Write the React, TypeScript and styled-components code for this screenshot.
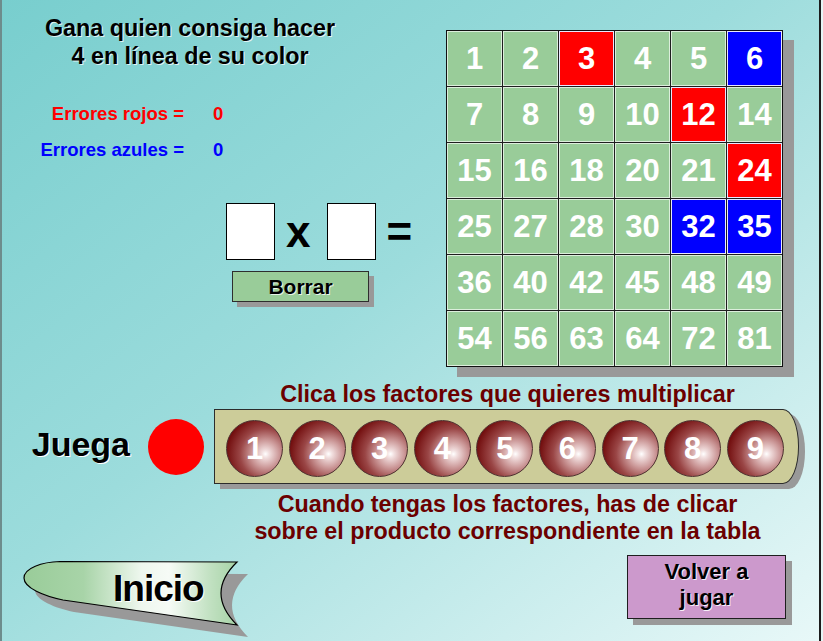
import styled, { createGlobalStyle } from 'styled-components';

const FONT = `"Liberation Sans", Arial, Helvetica, sans-serif`;

const GlobalStyle = createGlobalStyle`
  html, body {
    margin: 0;
    padding: 0;
  }
  body {
    background: #e6f6f6;
    font-family: ${FONT};
  }
`;

const Page = styled.div`
  box-sizing: border-box;
  width: 821px;
  height: 641px;
  overflow: hidden;
  padding-top: 14px;
  border-left: 2px solid #6d8c8c;
  border-right: 2px solid #1c1c1c;
  background: linear-gradient(to bottom right, #78cece 0%, #9cdcdc 45%, #e8f8f8 100%);
  font-family: ${FONT};
  font-weight: bold;
`;

const TopSection = styled.div`
  display: flex;
  align-items: flex-start;
`;

const LeftColumn = styled.div`
  width: 444px;
  display: flex;
  flex-direction: column;
`;

const Title = styled.h1`
  width: 376px;
  margin: 0;
  font-size: 23.3px;
  line-height: 28px;
  font-weight: bold;
  text-align: center;
  color: #000;
  text-shadow: 1px 1px 0 rgba(255, 255, 255, 0.75);
`;

const ErrorGrid = styled.div`
  margin-top: 33px;
  display: grid;
  grid-template-columns: 182px auto;
  column-gap: 29px;
  row-gap: 14px;
  font-size: 18.5px;
  line-height: 22px;
`;

const ErrorLabel = styled.span<{ $color: string }>`
  text-align: right;
  color: ${({ $color }) => $color};
`;

const ErrorValue = styled.span<{ $color: string }>`
  color: ${({ $color }) => $color};
`;

const Equation = styled.div`
  margin: 42px 0 0 224px;
  display: flex;
  align-items: center;
  height: 57px;
`;

const FactorBox = styled.div<{ $left?: number }>`
  box-sizing: border-box;
  width: 49px;
  height: 57px;
  margin-left: ${({ $left = 0 }) => $left}px;
  background: #fff;
  border: 1px solid #000;
`;

const Operator = styled.span<{ $left: number }>`
  margin-left: ${({ $left }) => $left}px;
  font-size: 44px;
  line-height: 44px;
  color: #000;
`;

const BorrarButton = styled.button`
  box-sizing: border-box;
  margin: 11px 0 0 230px;
  width: 137px;
  height: 31px;
  padding: 0;
  background: #99cc99;
  border: 1px solid #2e2e2e;
  box-shadow: 5px 5px 0 #999;
  font-family: ${FONT};
  font-weight: bold;
  font-size: 21px;
  color: #000;
  text-shadow: 1px 1px 0 rgba(255, 255, 255, 0.8);
  cursor: pointer;
`;

const Board = styled.div`
  margin-top: 16px;
  display: grid;
  grid-template-columns: repeat(6, 55px);
  grid-auto-rows: 55px;
  gap: 1px;
  background: #1e1e1e;
  border: 1px solid #111;
  box-shadow: 11px 10px 0 #999;
`;

const Cell = styled.div<{ $bg: string }>`
  box-sizing: border-box;
  display: flex;
  align-items: center;
  justify-content: center;
  background: ${({ $bg }) => $bg};
  border: 1px solid ${({ $bg }) => ($bg === '#99cc99' ? '#dceedc' : '#e8e8ff')};
  color: #fff;
  font-size: 31px;
  cursor: pointer;
`;

const GameArea = styled.div`
  margin-top: 14px;
  display: grid;
  grid-template-columns: 212px 587px;
`;

const Instruction = styled.p<{ $lineHeight: number }>`
  grid-column: 2;
  margin: 0;
  text-align: center;
  font-size: 23.3px;
  line-height: ${({ $lineHeight }) => $lineHeight}px;
  color: #6b0000;
`;

const PlayerCell = styled.div`
  display: flex;
  align-items: center;
  justify-content: flex-end;
  gap: 18px;
  padding-right: 10px;
  margin-top: 2px;
`;

const PlayerLabel = styled.span`
  font-size: 34px;
  line-height: 34px;
  margin-bottom: 6px;
  color: #000;
  text-shadow: 1px 1px 0 #fff;
`;

const PlayerDot = styled.div<{ $color: string }>`
  width: 56px;
  height: 56px;
  border-radius: 50%;
  background: ${({ $color }) => $color};
`;

const Tray = styled.div`
  box-sizing: border-box;
  margin-top: 2px;
  width: 585px;
  height: 75px;
  display: flex;
  align-items: flex-start;
  gap: 5.6px;
  padding: 10px 0 0 11px;
  background: #cccc99;
  border: 1px solid #2c2c2c;
  border-radius: 0 16px 16px 0 / 0 37px 37px 0;
  box-shadow: 6px 5px 0 #999;
`;

const Ball = styled.button`
  box-sizing: border-box;
  width: 57px;
  height: 57px;
  flex: none;
  padding: 0;
  border-radius: 50%;
  border: 1px solid #4d3030;
  background: radial-gradient(
    circle at 70% 60%,
    #ffffff 0%,
    #f2e0e0 7%,
    #cc9999 27%,
    #9a4646 50%,
    #741010 76%,
    #5a0000 100%
  );
  color: #fff;
  font-family: ${FONT};
  font-weight: bold;
  font-size: 31px;
  cursor: pointer;
`;

const BottomText = styled(Instruction)`
  margin-top: 7px;
`;

const Footer = styled.div`
  margin-top: 10px;
  display: flex;
  align-items: flex-start;
`;

const InicioButton = styled.button`
  position: relative;
  display: flex;
  align-items: flex-start;
  width: 230px;
  height: 82px;
  margin: 3px 0 0 20px;
  padding: 11px 0 0 91px;
  box-sizing: border-box;
  background: none;
  border: none;
  cursor: pointer;
  font-family: ${FONT};
  font-weight: bold;
  font-size: 37px;
  line-height: 40px;
  letter-spacing: -1px;
  color: #000;
  text-shadow: 1px 1px 0 #fff;
`;

const BannerShape = styled.svg`
  position: absolute;
  left: 0;
  top: 0;
`;

const InicioText = styled.span`
  position: relative;
`;

const VolverButton = styled.button`
  box-sizing: border-box;
  margin: 0 33px 0 auto;
  width: 159px;
  height: 64px;
  padding: 3px 0 0;
  display: flex;
  flex-direction: column;
  align-items: center;
  justify-content: flex-start;
  background: #cc99cc;
  border: 1px solid #1e1e1e;
  box-shadow: 6px 6px 0 #999;
  font-family: ${FONT};
  font-weight: bold;
  font-size: 22px;
  line-height: 26px;
  color: #000;
  text-shadow: 1px 1px 0 rgba(255, 255, 255, 0.85);
  cursor: pointer;
`;

const GREEN = '#99cc99';
const RED = '#ff0000';
const BLUE = '#0000ff';

const board: [number, string][] = [
  [1, GREEN], [2, GREEN], [3, RED], [4, GREEN], [5, GREEN], [6, BLUE],
  [7, GREEN], [8, GREEN], [9, GREEN], [10, GREEN], [12, RED], [14, GREEN],
  [15, GREEN], [16, GREEN], [18, GREEN], [20, GREEN], [21, GREEN], [24, RED],
  [25, GREEN], [27, GREEN], [28, GREEN], [30, GREEN], [32, BLUE], [35, BLUE],
  [36, GREEN], [40, GREEN], [42, GREEN], [45, GREEN], [48, GREEN], [49, GREEN],
  [54, GREEN], [56, GREEN], [63, GREEN], [64, GREEN], [72, GREEN], [81, GREEN],
];

const factors = [1, 2, 3, 4, 5, 6, 7, 8, 9];

const bannerPath =
  'M38 3.5 L215 4 Q183 35 215 67 L41 42 C22 38 2 30 2 20 C2 10 20 4 38 3.5 Z';

const App = () => {
  return (
    <>
      <GlobalStyle />
      <Page>
        <TopSection>
          <LeftColumn>
            <Title>
              Gana quien consiga hacer
              <br />
              4 en línea de su color
            </Title>
            <ErrorGrid>
              <ErrorLabel $color={RED}>Errores rojos =</ErrorLabel>
              <ErrorValue $color={RED}>0</ErrorValue>
              <ErrorLabel $color={BLUE}>Errores azules =</ErrorLabel>
              <ErrorValue $color={BLUE}>0</ErrorValue>
            </ErrorGrid>
            <Equation>
              <FactorBox />
              <Operator $left={11}>x</Operator>
              <FactorBox $left={17} />
              <Operator $left={10}>=</Operator>
            </Equation>
            <BorrarButton>Borrar</BorrarButton>
          </LeftColumn>
          <Board>
            {board.map(([value, color]) => (
              <Cell key={value} $bg={color}>
                {value}
              </Cell>
            ))}
          </Board>
        </TopSection>

        <GameArea>
          <Instruction $lineHeight={26}>Clica los factores que quieres multiplicar</Instruction>
          <PlayerCell>
            <PlayerLabel>Juega</PlayerLabel>
            <PlayerDot $color={RED} />
          </PlayerCell>
          <Tray>
            {factors.map((n) => (
              <Ball key={n}>{n}</Ball>
            ))}
          </Tray>
          <BottomText $lineHeight={27}>
            Cuando tengas los factores, has de clicar
            <br />
            sobre el producto correspondiente en la tabla
          </BottomText>
        </GameArea>

        <Footer>
          <InicioButton>
            <BannerShape width="230" height="82" viewBox="0 0 230 82">
              <defs>
                <linearGradient id="inicioFill" x1="0" y1="0" x2="1" y2="0">
                  <stop offset="0" stopColor="#99cc99" />
                  <stop offset="0.28" stopColor="#a8d4a8" />
                  <stop offset="0.55" stopColor="#eef7ee" />
                  <stop offset="0.68" stopColor="#f6fbf6" />
                  <stop offset="0.88" stopColor="#c0e0c0" />
                  <stop offset="1" stopColor="#a6d3a6" />
                </linearGradient>
              </defs>
              <path d={bannerPath} transform="translate(11 12)" fill="#999999" />
              <path d={bannerPath} fill="url(#inicioFill)" stroke="#000" strokeWidth="1.2" />
            </BannerShape>
            <InicioText>Inicio</InicioText>
          </InicioButton>
          <VolverButton>
            <span>Volver a</span>
            <span>jugar</span>
          </VolverButton>
        </Footer>
      </Page>
    </>
  );
};

export default App;
